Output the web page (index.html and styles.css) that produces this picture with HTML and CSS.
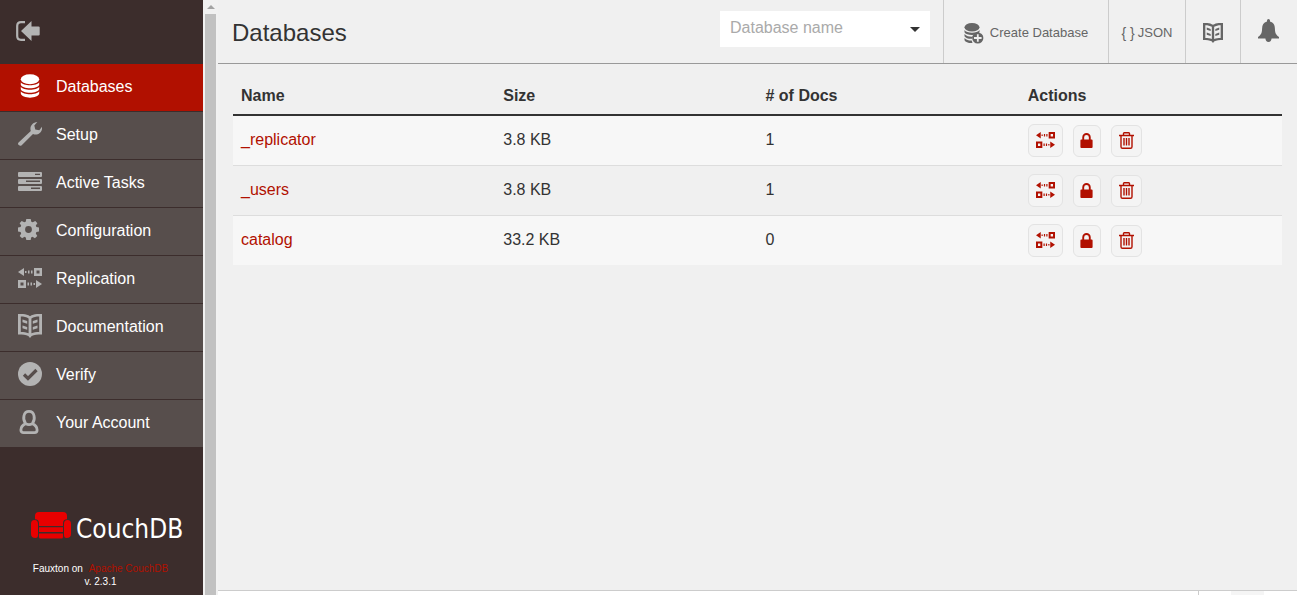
FILE: index.html
```html
<!DOCTYPE html>
<html lang="en">
<head>
<meta charset="utf-8">
<title>Databases - Fauxton</title>
<link rel="stylesheet" href="styles.css">
</head>
<body>
<svg class="sprite" aria-hidden="true">
  <symbol id="i-db" viewBox="0 0 20 24">
    <ellipse cx="10" cy="5.200" rx="9.200" ry="5"/>
    <path d="M.8 8.200c2 4 16.400 4 18.400 0v2.600c-1 4.600-17.400 4.600-18.400 0zM.8 12.800c2 4 16.400 4 18.400 0v2.400c-1 4.600-17.400 4.600-18.400 0zM.8 17.200c2 4 16.400 4 18.400 0v2.400c-1 5.400-17.400 5.400-18.400 0z"/>
  </symbol>
  <symbol id="i-repl" viewBox="0 0 24 20">
    <path d="M0 4l6-4v8zM7 3h1.500v2H7zM10 2.500h1.500v3H10zM13 2.500h1.500v3H13zM24 16l-6-4v8zM9.500 14.500H11v3H9.500zM12.500 14.500H14v3h-1.500zM15.500 15H17v2h-1.500z"/>
    <path fill-rule="evenodd" d="M16 0h8v8h-8zM18.500 2.500v3h3v-3zM0 12h8v8H0zM2.500 14.500v3h3v-3z"/>
  </symbol>
  <symbol id="i-book" viewBox="0 0 24 24">
    <path fill-rule="evenodd" d="M0 0c4.500-.4 9 .2 12 2.200C15 .2 19.500-.4 24 0v20.500c-4.500 0-8 .3-10.300 1.500L12 24l-1.700-2C8 20.800 4.500 20.500 0 20.500zM2.800 2.600v15.300c3 0 5.600.3 7.800 1.300V4.600C8.500 3.200 5.800 2.600 2.800 2.600zM21.200 2.600c-3 0-5.700.6-7.800 2v14.600c2.200-1 4.800-1.300 7.800-1.300z"/>
    <path d="M4.500 5.500l4.700 1.600v2.600L4.500 8.200zM4.500 11.500l4.700 1.600v2.600l-4.700-1.500zM19.500 5.500l-4.700 1.600v2.600l4.700-1.500zM19.500 11.500l-4.700 1.600v2.600l4.700-1.500z"/>
  </symbol>
  <symbol id="i-lock" viewBox="0 0 13 16">
    <path fill-rule="evenodd" d="M2 7V4.500a4.500 4.500 0 0 1 9 0V7h1q1 0 1 1v7q0 1-1 1H1q-1 0-1-1V8q0-1 1-1zM4 7h5V4.500a2.500 2.500 0 0 0-5 0z"/>
  </symbol>
  <symbol id="i-trash" viewBox="0 0 15 17">
    <path d="M0 3.500h15M4.500 3V1.500q0-.8.8-.8h4.400q.8 0 .8.8V3M2 3.500v11.200q0 1.600 1.500 1.600h8q1.500 0 1.500-1.600V3.500M5 6v7.500M7.500 6v7.500M10 6v7.500" fill="none" stroke="currentColor" stroke-width="1.400"/>
  </symbol>
</svg>

<div class="app">
  <aside class="sidebar">
    <button class="collapse" type="button" aria-label="Collapse menu">
      <svg width="24" height="20" viewBox="0 0 24 20"><path d="M9 1.200H5Q1.200 1.200 1.200 5v10q0 3.800 3.800 3.800h4" fill="none" stroke="currentColor" stroke-width="2.200"/><path d="M5 10L15.500 0v5.500h7q1.200 0 1.200 1v7q0 1-1.200 1h-7V20z"/></svg>
    </button>
    <nav class="nav">
      <a class="nav-item active" href="#databases"><span class="nav-icon"><svg width="20" height="24"><use href="#i-db"/></svg></span>Databases</a>
      <a class="nav-item" href="#setup"><span class="nav-icon"><svg width="24" height="24" viewBox="0 0 24 24"><path d="M.8 20.200L12.800 9.100C11.300 4.800 14.300.2 19.300 0l-3 3.600 1 4 4 .6L24 4.800c.8 5.200-4.200 9.300-9 7.300L3.700 23.200Q2.300 24.500.8 23.100-.8 21.600.8 20.200z"/></svg></span>Setup</a>
      <a class="nav-item" href="#tasks"><span class="nav-icon"><svg width="24" height="19" viewBox="0 0 24 19"><path fill-rule="evenodd" d="M1 0h22q1 0 1 1v3q0 1-1 1H1Q0 5 0 4V1q0-1 1-1zM17 1.700v1.300h5V1.700zM1 7h22q1 0 1 1v3q0 1-1 1H1q-1 0-1-1V8q0-1 1-1zM8 8.500v1.500h14V8.500zM1 14h22q1 0 1 1v3q0 1-1 1H1q-1 0-1-1v-3q0-1 1-1zM13 15.500V17h9v-1.500z"/></svg></span>Active Tasks</a>
      <a class="nav-item" href="#config"><span class="nav-icon start"><svg width="21" height="21" viewBox="-10.500 -10.500 21 21"><path fill-rule="evenodd" d="M-2.200-10.500h4.400l.6 2.700 1.400.6L6.800-8.600 8.900-6.300 7.300-4l.6 1.500 2.600.4v4.200l-2.600.5L7.300 4 8.800 6.400 6.400 8.800 4 7.300l-1.400.6-.4 2.600h-4.400l-.5-2.600L-4 7.300-6.400 8.800-8.800 6.400-7.300 4l-.6-1.400-2.600-.5v-4.200l2.600-.4L-7.300-4-8.900-6.300-6.800-8.600-4.200-7.200l1.400-.6zM0-3.400a3.400 3.400 0 1 0 0 6.800 3.400 3.400 0 0 0 0-6.800z"/></svg></span>Configuration</a>
      <a class="nav-item" href="#replication"><span class="nav-icon"><svg width="24" height="20"><use href="#i-repl"/></svg></span>Replication</a>
      <a class="nav-item" href="#docs"><span class="nav-icon"><svg width="24" height="24"><use href="#i-book"/></svg></span>Documentation</a>
      <a class="nav-item" href="#verify"><span class="nav-icon"><svg width="24" height="24" viewBox="0 0 24 24"><circle cx="12" cy="12" r="12"/><path d="M6 12.500l4 4L18.500 8" fill="none" stroke="#574e4c" stroke-width="3.200"/></svg></span>Verify</a>
      <a class="nav-item" href="#account"><span class="nav-icon start"><svg width="22" height="24" viewBox="0 0 22 24"><path d="M7.600 13.600C4.200 9 5.500 1.400 11 1.400s6.800 7.600 3.400 12.200c3.200 1.400 4.700 3 4.700 6.400 0 2-1 2.600-2.600 2.600h-11c-1.600 0-2.600-.6-2.600-2.600 0-3.400 1.500-5 4.700-6.400zM7.600 13.600q3.400 2 6.800 0" fill="none" stroke="currentColor" stroke-width="2.800"/></svg></span>Your Account</a>
    </nav>
    <footer class="brand">
      <div class="logo">
        <svg width="40" height="27" viewBox="0 0 40 27"><path d="M4 7.200V4Q4 0 8 0q12-.8 24 0 4 0 4 4v3.200q-4 0-4 4V14H8v-2.800q0-4-4-4zM3.500 8Q7 8 7 12v11q0 3-2.500 3Q0 26 0 22V12q0-4 3.500-4zM36.500 8Q33 8 33 12v11q0 3 2.500 3 4.500 0 4.500-4V12q0-4-3.500-4zM8 15.300h24v4.700H8zM8 21.500h24V25q0 1.500-1.500 1.500h-21Q8 26.500 8 25z"/></svg>
        <span>CouchDB</span>
      </div>
      <p class="version">Fauxton on <a href="#couchdb">Apache CouchDB</a><br>v. 2.3.1</p>
    </footer>
  </aside>
  <div class="scrollbar" aria-hidden="true"><i class="scroll-up"></i><i class="thumb"></i></div>

  <main class="main">
    <header class="header">
      <h1>Databases</h1>
      <div class="picker">
        <select aria-label="Database name"><option>Database name</option></select>
      </div>
      <button class="tool create" type="button">
        <svg width="20" height="21" viewBox="0 0 20 21"><ellipse cx="8" cy="4.300" rx="7.500" ry="4.300"/><path d="M.5 7c2 3.500 13 3.500 15 0v2.300c-1.500 3.600-13.500 3.600-15 0zM.5 11c2 2.700 7 3 8.500 2.600l-1 2.200c-3.500.2-6.500-.8-7.500-2.600zM.5 15c2 2.300 5 2.600 7.200 2.500l.8 2.500C4.500 20.200 1.500 19.200.5 17.200z"/><circle cx="13.800" cy="15" r="5.600"/><path d="M13.800 11.200v7.600M10 15h7.600" stroke="#f0f0f0" stroke-width="1.800"/></svg>
        Create Database
      </button>
      <button class="tool json" type="button"><span class="braces">{ }</span>JSON</button>
      <button class="tool docs" type="button" aria-label="Documentation"><svg width="20" height="20"><use href="#i-book"/></svg></button>
      <button class="tool bell" type="button" aria-label="Notifications"><svg width="21" height="23" viewBox="0 0 21 23"><path d="M9 2.500Q8.700 0 10.500 0T12 2.500c3.500 1 4.800 3.500 4.900 7 .1 4.500 1.100 6.500 4.100 8.500v1.500H0V18c3-2 4-4 4.100-8.500.1-3.500 1.400-6 4.900-7zM7.300 19h6.400q-.4 4-3.200 4t-3.200-4z"/></svg></button>
    </header>
    <section class="content">
      <table>
        <thead><tr><th>Name</th><th>Size</th><th># of Docs</th><th>Actions</th></tr></thead>
        <tbody>
          <tr><td><a href="#_replicator">_replicator</a></td><td>3.8 KB</td><td>1</td><td class="cell-actions"><div class="actions">
            <button class="act repl" type="button" aria-label="Replicate _replicator"><svg width="19" height="16"><use href="#i-repl"/></svg></button>
            <button class="act lock" type="button" aria-label="Permissions for _replicator"><svg width="13" height="15"><use href="#i-lock"/></svg></button>
            <button class="act trash" type="button" aria-label="Delete _replicator"><svg width="15" height="17"><use href="#i-trash"/></svg></button></div></td></tr>
          <tr><td><a href="#_users">_users</a></td><td>3.8 KB</td><td>1</td><td class="cell-actions"><div class="actions">
            <button class="act repl" type="button" aria-label="Replicate _users"><svg width="19" height="16"><use href="#i-repl"/></svg></button>
            <button class="act lock" type="button" aria-label="Permissions for _users"><svg width="13" height="15"><use href="#i-lock"/></svg></button>
            <button class="act trash" type="button" aria-label="Delete _users"><svg width="15" height="17"><use href="#i-trash"/></svg></button></div></td></tr>
          <tr><td><a href="#catalog">catalog</a></td><td>33.2 KB</td><td>0</td><td class="cell-actions"><div class="actions">
            <button class="act repl" type="button" aria-label="Replicate catalog"><svg width="19" height="16"><use href="#i-repl"/></svg></button>
            <button class="act lock" type="button" aria-label="Permissions for catalog"><svg width="13" height="15"><use href="#i-lock"/></svg></button>
            <button class="act trash" type="button" aria-label="Delete catalog"><svg width="15" height="17"><use href="#i-trash"/></svg></button></div></td></tr>
        </tbody>
      </table>
    </section>
    <footer class="pager"><div class="pager-box"><i></i></div></footer>
  </main>
</div>
</body>
</html>
```

FILE: styles.css
```css
* { box-sizing: border-box; }
body {
  margin: 0;
  background: #f0f0f0;
  color: #333;
  font: 16px/20px "Liberation Sans", Arial, sans-serif;
}
a { text-decoration: none; }
button { margin: 0; padding: 0; border: 0; background: none; font: inherit; color: inherit; cursor: pointer; }
svg { display: block; fill: currentColor; flex: none; }
.sprite { display: none; }

.app { display: flex; height: 100vh; overflow: hidden; }

.sidebar {
  display: flex;
  flex-direction: column;
  flex: none;
  width: 203px;
  background: #3c2d2c;
}
.collapse {
  display: flex;
  align-items: center;
  flex: none;
  height: 64px;
  padding: 0 16px 2px;
  color: #b3b3b3;
}
.nav-item {
  display: flex;
  align-items: center;
  height: 48px;
  padding: 0 17px 2px;
  border-bottom: 1px solid #3c2d2c;
  background: #574e4c;
  color: #fff;
}
.nav-item.active { background: #b11000; }
.nav-icon {
  display: flex;
  justify-content: center;
  width: 26px;
  margin-right: 13px;
  padding-bottom: 2px;
  color: #b3b3b3;
}
.nav-icon.start { justify-content: flex-start; padding-left: 1px; }
.nav-item.active .nav-icon { color: #fff; }

.brand { margin-top: auto; padding-bottom: 7px; text-align: center; }
.logo { display: flex; padding-left: 31px; gap: 5px; color: #e80000; }
.logo span {
  color: #fff;
  font: 26px/34px "DejaVu Sans Condensed", "Noto Sans", sans-serif;
}
.version {
  margin: 16px 0 0;
  padding-right: 2px;
  color: #fff;
  font-size: 10px;
  line-height: 13px;
}
.version a { padding-left: 3px; color: #b11000; }

.scrollbar {
  display: flex;
  flex-direction: column;
  align-items: center;
  flex: none;
  width: 15px;
  background: #f1f1f1;
}
.scroll-up {
  margin: 5px 0;
  border: 4px solid transparent;
  border-top: 0;
  border-bottom-color: #a3a3a3;
}
.thumb { flex: 1; width: 11px; background: #c1c1c1; }

.main { display: flex; flex-direction: column; flex: 1; min-width: 0; }
.header {
  display: flex;
  flex: none;
  height: 64px;
  border-bottom: 1px solid #999;
}
h1 {
  flex: 1;
  margin: 0;
  padding: 18px 14px;
  font-size: 24px;
  font-weight: 400;
  line-height: 30px;
}
.picker { position: relative; width: 210px; margin: 11px 13px 0 0; }
.picker select {
  width: 100%;
  height: 36px;
  padding: 0 10px 3px;
  border: 0;
  border-radius: 0;
  background: #fff;
  color: #aaa;
  font: inherit;
  appearance: none;
}
.picker::after {
  content: "";
  position: absolute;
  top: 16px;
  right: 10px;
  border: 5px solid transparent;
  border-top-color: #333;
  border-bottom: 0;
  pointer-events: none;
}
.tool {
  display: flex;
  align-items: center;
  justify-content: center;
  border-left: 1px solid #ccc;
  color: #666;
  font-size: 13px;
  padding-top: 2px;
}
.create { width: 165px; gap: 6px; }
.create svg { margin-top: 2px; }
.json { width: 77px; gap: 3px; }
.braces { font-size: 14px; }
.docs { width: 55px; }
.bell { width: 57px; padding: 0 2px 2px 0; }

.content { flex: 1; padding: 11px 15px; overflow: auto; }
table { width: 100%; table-layout: fixed; border-spacing: 0; }
th, td { text-align: left; }
th { padding: 11px 8px 8px; border-bottom: 2px solid #333; }
td { padding: 8px 8px 10px; }
.cell-actions { padding-bottom: 8px; }
tr + tr td { border-top: 1px solid #ddd; }
tbody tr:nth-child(odd) { background: #f7f7f7; }
td a { color: #b11000; }
.actions { display: flex; align-items: flex-end; gap: 10px; }
.act {
  display: flex;
  align-items: center;
  justify-content: center;
  height: 32px;
  padding-bottom: 2px;
  border: 1px solid #e3e3e3;
  border-radius: 6px;
  background: #f4f4f4;
  color: #b11000;
}
.repl { width: 35px; height: 33px; }
.lock { width: 28px; }
.trash { width: 31px; }

.pager {
  display: flex;
  justify-content: flex-end;
  flex: none;
  height: 5px;
  border-top: 1px solid #ccc;
  background: #fff;
}
.pager-box { display: flex; width: 99px; padding-left: 32px; border-left: 1px solid #ccc; }
.pager-box i { width: 33px; background: #f5f5f5; }
```
